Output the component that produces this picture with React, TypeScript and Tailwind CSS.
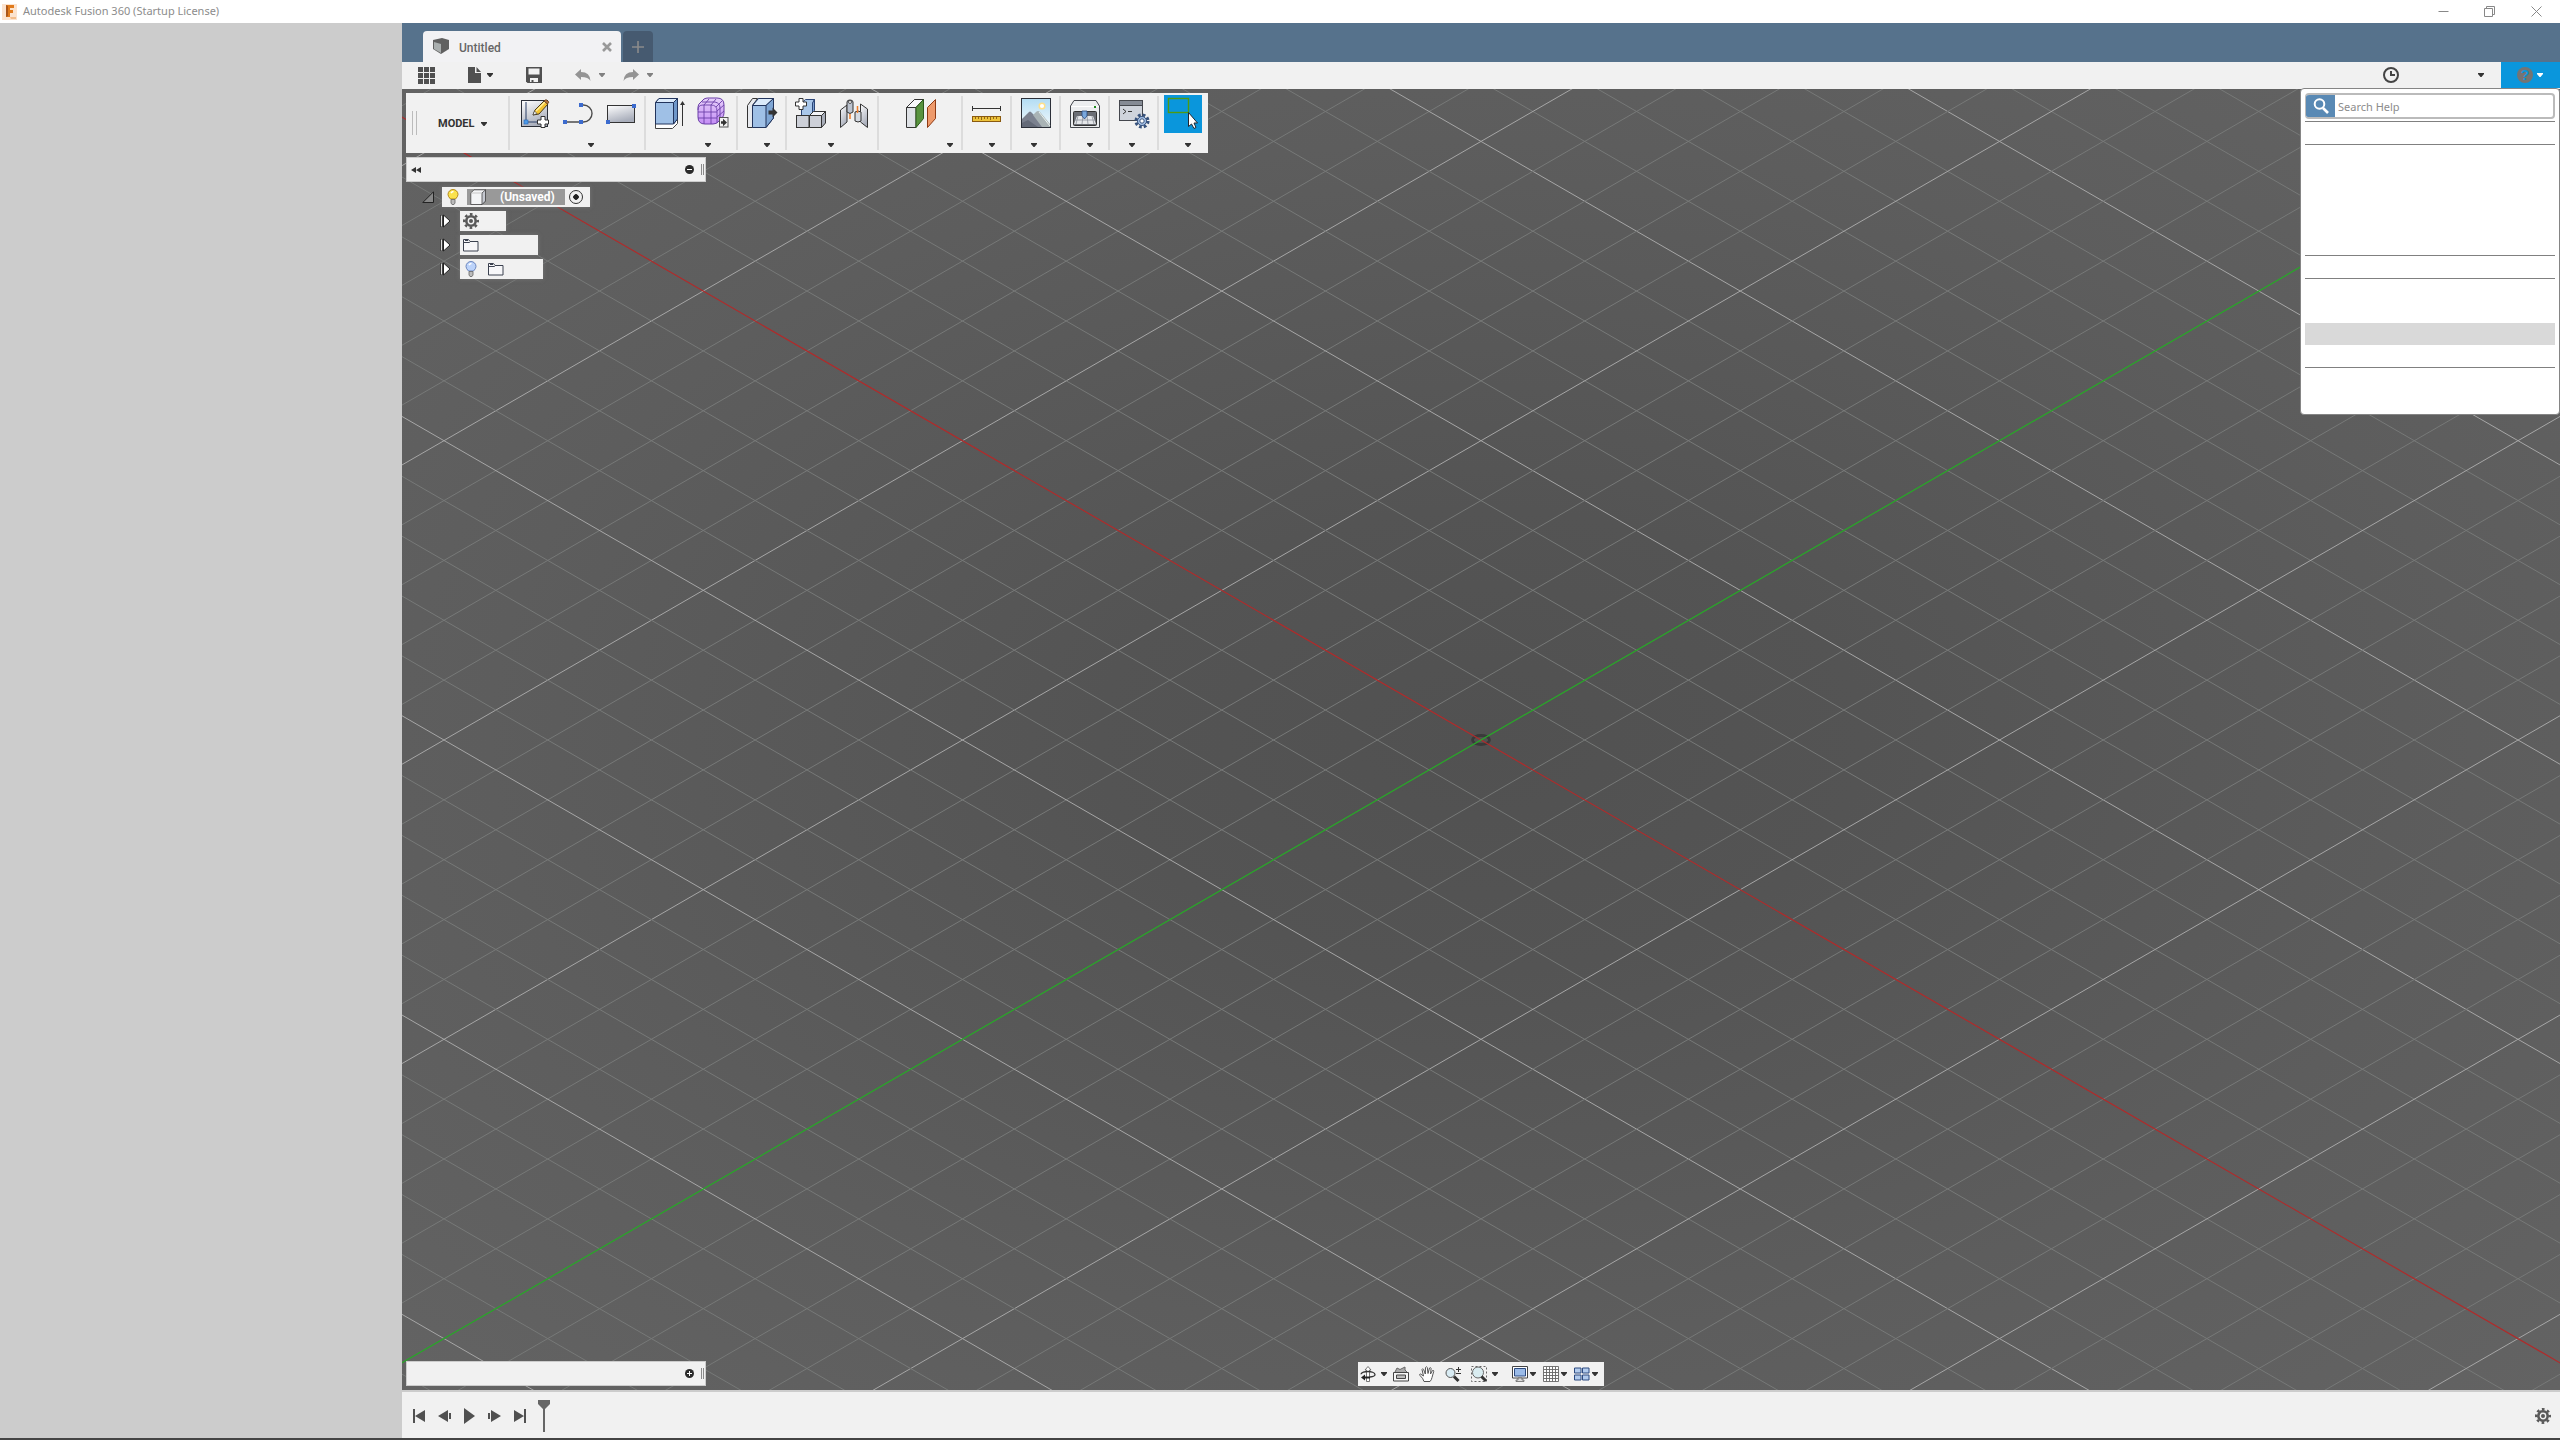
import type { ReactNode } from 'react'

const MINOR_X = 51.85
const MINOR_Y = 29.93
const EXTENT = 60

function Caret({ className = 'fill-[#333]' }: { className?: string }) {
    return (
        <svg viewBox="0 0 6 4" className={`h-1 w-1.5 shrink-0 ${className}`}>
            <path d="M0 0h6v1L3.5 4h-1L0 1z" />
        </svg>
    )
}

function Icon({ children, label }: { children: ReactNode; label: string }) {
    return (
        <button aria-label={label} className="h-8 w-8 shrink-0">
            <svg viewBox="0 0 32 32" className="h-8 w-8 overflow-visible" fill="none">
                {children}
            </svg>
        </button>
    )
}

function Small({ children, label }: { children: ReactNode; label: string }) {
    return (
        <button aria-label={label} className="h-4 w-4 shrink-0">
            <svg viewBox="0 0 16 16" className="h-4 w-4 overflow-visible" fill="none">
                {children}
            </svg>
        </button>
    )
}

function GearShape({ color = '#595959' }: { color?: string }) {
    return (
        <g stroke={color}>
            <circle cx="8" cy="8" r="6.8" strokeWidth="2.4" strokeDasharray="2.67 2.67" strokeDashoffset="1.33" />
            <circle cx="8" cy="8" r="4.7" strokeWidth="2.6" />
            <circle cx="8" cy="8" r="2" fill={color} stroke="none" />
        </g>
    )
}

function Plus({ x, y }: { x: number; y: number }) {
    return (
        <g transform={`translate(${x} ${y})`}>
            <path d="M-2 -5.5h4v3.5h3.5v4h-3.5v3.5h-4v-3.5h-3.5v-4h3.5z" fill="#fff" stroke="#333" />
        </g>
    )
}

function SketchIcon() {
    return (
        <Icon label="Create sketch">
            <rect x="3.5" y="2.5" width="26" height="26" fill="url(#steel)" stroke="#2b2f38" />
            <path d="M8 4v20h14" stroke="#2b3f66" />
            <rect x="6" y="22" width="4" height="4" fill="#4d9be8" stroke="#2466b8" strokeWidth=".6" />
            <path d="M15 17l2-5L26 3l4 3-9 10z" fill="#f5c431" stroke="#4a3a1a" />
            <path d="M18 13l9-9" stroke="#fff0a0" strokeWidth="1.4" />
            <path d="M26 3l2-1.5 3 2.5-1.5 2z" fill="#b5733c" stroke="#5d3a1c" strokeWidth=".7" />
            <path d="M15 17l1.5-4 2.5 2.5z" fill="#fff" stroke="#333" strokeWidth=".6" />
            <Plus x={25} y={24} />
        </Icon>
    )
}

function LineIcon() {
    return (
        <Icon label="Line">
            <path d="M4 24h18.5a8.5 8.5 0 0 0 0-17H20" stroke="#4c4c4c" strokeWidth="1.4" />
            <path d="M2 22h4v4H2zM18 22h4v4h-4zM18 5h4v4h-4z" fill="#3c6bce" />
        </Icon>
    )
}

function RectIcon() {
    return (
        <Icon label="Rectangle">
            <rect x="3.5" y="7.5" width="27" height="17" fill="url(#steel)" stroke="#333" />
            <path d="M2 22h4v4H2zM28 6h4v4h-4z" fill="#3c6bce" />
        </Icon>
    )
}

function ExtrudeIcon() {
    return (
        <Icon label="Extrude">
            <path d="M1.5 25v5.5h17l5-5V20" fill="#fff" stroke="#444" />
            <path d="M1.5 4.5L5 .5h18.5V21l-4 5h-18z" fill="#9fc0e6" stroke="#22345c" />
            <path d="M1.5 4.5L5 .5h18.5l-4 4z" fill="#dbeafa" stroke="#22345c" />
            <path d="M19.5 4.5l4-4V21l-4 5z" fill="#6f97c9" stroke="#22345c" />
            <path d="M28.5 6v22" stroke="#333" />
            <path d="M28.5 3l2.5 4h-5z" fill="#333" />
        </Icon>
    )
}

function FormIcon() {
    return (
        <Icon label="Create form">
            <path d="M1 9Q1 6 4 4l3-3q2-1 4-1h9q7 0 7 7v8q0 3-2 5l-3 3q-2 3-6 3H8q-7 0-7-7z" fill="url(#violet)" stroke="#6b3fa8" />
            <path d="M1 12q0-5 5-5h8q6 0 6 6v12M1 14h19M1 20h19M7 7v19M14 7v19M5 4h13q5 1 5 6v13M20 13l7-6M20 19l7-6M7 7l5-6M14 7l5-6M19 9l6-6" stroke="#6b3fa8" strokeWidth=".9" />
            <rect x="22.5" y="19.5" width="8.5" height="9.5" fill="#f1f1f1" stroke="#555" />
            <path d="M24 23.2h2v-2.5l4 3.7-4 3.8v-2.500h-2z" fill="#333" />
        </Icon>
    )
}

function PressPullIcon() {
    return (
        <Icon label="Press pull">
            <path d="M1.5 7.5l5-7h5l-5 7v22h-5z" fill="#e8eaee" stroke="#333" />
            <path d="M6.5 7.5l6-7H27.5V20l-7.5 9.5H6.5z" fill="#9fc0e6" stroke="#22345c" />
            <path d="M6.5 7.5H20l7.5-7H12.5z" fill="#dbeafa" stroke="#22345c" />
            <path d="M20 7.5l7.5-7V20L20 29.5z" fill="#7fa6d4" stroke="#22345c" />
            <path d="M22.5 12.500h4V9.500l5 5-5 5v-3h-4z" fill="#333" />
        </Icon>
    )
}

function ComponentIcon() {
    return (
        <Icon label="New component">
            <path d="M6.5 5l4-3.5h9L18 5v12.5H6.500z" fill="#a9c7ea" stroke="#2b4577" />
            <path d="M19.5 1.5v11l-2 5V5z" fill="#7a9fd0" stroke="#2b4577" />
            <rect x="1.5" y="17.5" width="12.5" height="12" fill="#cdd0d8" stroke="#333" />
            <path d="M14.5 17.5l4-4h12l-4 4z" fill="#f4f5f8" stroke="#333" />
            <path d="M14.5 17.5h12v12h-12z" fill="#cdd0d8" stroke="#333" />
            <path d="M26.5 17.5l4-4V25l-4 4.5z" fill="#a9aeba" stroke="#333" />
            <Plus x={6} y={6} />
        </Icon>
    )
}

function JointIcon() {
    return (
        <Icon label="Joint">
            <path d="M2.5 12l6.500-5v17l-6.500 5.500z" fill="url(#steel)" stroke="#333" />
            <path d="M9 4q0-2 3-2t3 2v10q-3 3-6 0z" fill="#bcc3cf" stroke="#333" />
            <circle cx="12" cy="4" r="1.5" fill="#fff" stroke="#333" strokeWidth=".8" />
            <path d="M22.500 6l7 5v18.500L22.500 24z" fill="url(#steel)" stroke="#333" />
            <path d="M17 14q3-2 6 0v9q-3 2-6 0z" fill="#d5dae2" stroke="#333" />
            <path d="M12 16v5M19.500 8v7" stroke="#ed7d2b" strokeWidth="1.5" />
        </Icon>
    )
}

function PlaneIcon() {
    return (
        <Icon label="Offset plane">
            <path d="M2.5 9.5l8-8h9l-7.5 8v20h-9.5z" fill="#dfe2e6" stroke="#333" />
            <path d="M2.5 9.5l8-8h9l-7.5 8z" fill="#f7f8fa" stroke="#333" />
            <path d="M12 9.5l7.5-8v19L12 29.5z" fill="#58933f" stroke="#2c5a1c" />
            <path d="M23.5 9.5l8-8v19l-8 9z" fill="#ee9a6b" stroke="#8f3b14" />
        </Icon>
    )
}

function MeasureIcon() {
    return (
        <Icon label="Measure">
            <path d="M1.5 8v5M29.5 8v5M1.5 10.5h28" stroke="#333" />
            <rect x="1.5" y="18.5" width="28" height="5" fill="#ecc23a" stroke="#8a5a10" />
            <path d="M4.500 19v2M7.500 19v2M10.500 19v3M13.500 19v2M16.500 19v2M19.500 19v3M22.500 19v2M25.500 19v2" stroke="#7a4d0c" strokeWidth=".8" />
        </Icon>
    )
}

function CanvasIcon() {
    return (
        <Icon label="Insert image">
            <rect x="1.5" y=".5" width="29" height="29" fill="url(#sky)" stroke="#2b2f38" />
            <circle cx="22" cy="8" r="2.8" fill="#fff" stroke="#ffe08a" strokeWidth="1.5" />
            <path d="M2 21l7-7q1-1 2 0l15 15H2z" fill="#7b818f" />
            <path d="M13 17l3-3q2-2 4 0l10 12v3H22z" fill="#a9b3b5" />
            <path d="M2 25l6-3 10 7H2z" fill="#646a78" />
            <path d="M19 14l11 14" stroke="#e9f2ee" />
        </Icon>
    )
}

function PrintIcon() {
    return (
        <Icon label="3D print">
            <path d="M1.5 8l3.500-5.500h22l3.500 5.500v21.500h-29z" fill="#eceef0" stroke="#44474d" />
            <path d="M2 8.5h28" stroke="#fff" />
            <rect x="25" y="8" width="2" height="2" fill="#1d8a1d" />
            <rect x="4.500" y="13.5" width="23" height="14" rx="1" fill="#6b6e75" stroke="#333" />
            <path d="M8 18h16l3 8H5z" fill="#e5e7ea" />
            <path d="M9 18l-2 8M14 18l-1 8M18 18l1 8M23 18l2 8M6 22h20" stroke="#8b9099" strokeWidth=".8" />
            <path d="M13 13h5v5l-2.500 3-2.500-3z" fill="#79a7dc" stroke="#26477c" strokeWidth=".8" />
        </Icon>
    )
}

function ScriptIcon() {
    return (
        <Icon label="Scripts and add-ins">
            <rect x="1.5" y="2.5" width="23" height="20" fill="#cfd4dc" stroke="#44474d" />
            <path d="M2 3h22v4H2z" fill="#858b95" />
            <path d="M2 7.5h22" stroke="#44474d" />
            <path d="M5 11l3 2.5L5 16M10 13.5h4" stroke="#333" />
            <g transform="translate(24 23)">
                <circle r="5.8" stroke="#38537d" strokeWidth="3.5" strokeDasharray="2.6 1.95" />
                <circle r="4.5" fill="#a7c3e8" stroke="#38537d" />
                <circle r="2.2" fill="#fff" stroke="#38537d" />
            </g>
        </Icon>
    )
}

function SelectIcon() {
    return (
        <button aria-label="Select" className="h-[38px] w-[38px] bg-[#0a96dc]">
            <svg viewBox="0 0 38 38" className="h-full w-full" fill="none">
                <rect x="4.5" y="3.5" width="20" height="14" stroke="#4f9a12" strokeWidth="1.4" />
                <path d="M24.5 17.5v14l3-2.5 2.5 4.5 2-1-2-4.5h3.5z" fill="#fff" stroke="#22262e" />
            </svg>
        </button>
    )
}

function Section({ width, arrow, center, children }: { width: string; arrow: string; center?: boolean; children: ReactNode }) {
    return (
        <div className={`flex flex-col ${width}`}>
            <div className={`flex h-[38px] items-center gap-[11px] ${center ? 'justify-center' : 'pl-2'}`}>{children}</div>
            <button aria-label="More" className={`flex flex-1 items-end pb-1 ${arrow}`}>
                <Caret />
            </button>
        </div>
    )
}

function Divider() {
    return <div className="my-px w-0.5 shrink-0 bg-[#dcdcdc]" />
}

function Ribbon() {
    return (
        <div className="flex h-[60px] w-max bg-[#f1f1f1] py-0.5 pr-px">
            <div className="flex w-[102px] items-center">
                <div className="ml-1.5 h-6 w-[5px] border-x border-[#bbb]" />
                <button className="ml-[21px] flex items-center gap-1.5 pt-0.5 font-[Roboto,sans-serif] text-[11px] font-bold text-[#333]">
                    MODEL
                    <Caret />
                </button>
            </div>
            <Divider />
            <Section width="w-[134px]" arrow="pl-[78px]">
                <SketchIcon />
                <LineIcon />
                <RectIcon />
            </Section>
            <Divider />
            <Section width="w-[90px]" arrow="pl-[59px]">
                <ExtrudeIcon />
                <FormIcon />
            </Section>
            <Divider />
            <Section width="w-[47px]" arrow="pl-[26px]">
                <PressPullIcon />
            </Section>
            <Divider />
            <Section width="w-[90px]" arrow="pl-[41px]">
                <ComponentIcon />
                <JointIcon />
            </Section>
            <Divider />
            <Section width="w-[82px]" arrow="pl-[68px]" center>
                <PlaneIcon />
            </Section>
            <Divider />
            <Section width="w-[47px]" arrow="pl-[26px]">
                <MeasureIcon />
            </Section>
            <Divider />
            <Section width="w-[47px]" arrow="pl-[19px]">
                <CanvasIcon />
            </Section>
            <Divider />
            <Section width="w-[47px]" arrow="pl-[26px]">
                <PrintIcon />
            </Section>
            <Divider />
            <Section width="w-[47px]" arrow="pl-[19px]">
                <ScriptIcon />
            </Section>
            <Divider />
            <Section width="w-[48px]" arrow="pl-[26px]" center>
                <SelectIcon />
            </Section>
        </div>
    )
}

function TitleBar() {
    return (
        <header className="flex h-[23px] items-center bg-white">
            <svg viewBox="0 0 16 16" className="ml-0.5 h-4 w-4" fill="none">
                <path d="M0 0h15v16H0z" fill="#fbe3cf" />
                <path d="M4 1h8v3H8v2h3v3H8v4H4z" fill="#e07a1c" />
                <path d="M4 1l2 1v10l-2 1z" fill="#a9561a" />
                <path d="M8 13h6v2H9z" fill="#f3bd8c" />
            </svg>
            <h1 className="ml-[5px] font-['Noto_Sans',sans-serif] text-[11px] text-[#8c8c8c]">Autodesk Fusion 360 (Startup License)</h1>
            <div className="ml-auto flex">
                <button aria-label="Minimize" className="flex w-[46px] justify-center">
                    <svg viewBox="0 0 11 11" className="h-[11px] w-[11px]" stroke="#888" fill="none"><path d="M.5 5.5h10" /></svg>
                </button>
                <button aria-label="Restore" className="flex w-[46px] justify-center">
                    <svg viewBox="0 0 11 11" className="h-[11px] w-[11px]" stroke="#888" fill="none"><path d="M.5 2.5h8v8h-8zM2.5 2.5v-2h8v8h-2" /></svg>
                </button>
                <button aria-label="Close" className="flex w-12 justify-center">
                    <svg viewBox="0 0 11 11" className="h-[11px] w-[11px]" stroke="#888" fill="none"><path d="M.5.5l10 10M10.5.5l-10 10" /></svg>
                </button>
            </div>
        </header>
    )
}

function TabStrip() {
    return (
        <div className="flex h-[39px] items-end gap-0.5 bg-[#56728c] pl-[21px]">
            <div className="flex h-[31px] w-[198px] items-center rounded-t bg-[#f2f2f4] px-[9px] pt-px">
                <svg viewBox="0 0 18 18" className="h-[18px] w-[18px]">
                    <path d="M1 2l9-2 7 2v9l-8 5-8-5z" fill="#606060" />
                    <path d="M2 4l7 2v9l-7-4z" fill="#a9aeae" />
                </svg>
                <span className="ml-[9px] pt-px font-[Roboto,sans-serif] text-[12px] font-medium text-[#666]">Untitled</span>
                <button aria-label="Close tab" className="ml-auto">
                    <svg viewBox="0 0 10 10" className="h-2.5 w-2.5" stroke="#999" strokeWidth="2.6"><path d="M1 1l8 8M9 1l-8 8" /></svg>
                </button>
            </div>
            <button aria-label="New tab" className="flex h-[31px] w-[30px] items-center justify-center rounded-t bg-[#465a70]">
                <svg viewBox="0 0 12 12" className="h-3 w-3" stroke="#8b8b8b" strokeWidth="1.6"><path d="M6 0v12M0 6h12" /></svg>
            </button>
        </div>
    )
}

function QuickBar() {
    return (
        <div className="flex h-[27px] items-center bg-[#f1f1f1] pb-px pl-4">
            <button aria-label="Data panel">
                <svg viewBox="0 0 17 17" className="h-[17px] w-[17px]" fill="#505050">
                    <path d="M0 0h5v5H0zM6 0h5v5H6zM12 0h5v5h-5zM0 6h5v5H0zM6 6h5v5H6zM12 6h5v5h-5zM0 12h5v5H0zM6 12h5v5H6zM12 12h5v5h-5z" />
                </svg>
            </button>
            <button aria-label="File" className="ml-[33px] flex items-center gap-1.5">
                <svg viewBox="0 0 13 16" className="h-4 w-[13px]" fill="#505050"><path d="M0 0h7v6h6v10H0zM8.5 0L13 5H8.5z" /></svg>
                <Caret />
            </button>
            <button aria-label="Save" className="ml-[33px]">
                <svg viewBox="0 0 16 16" className="h-4 w-4">
                    <path d="M0 0h16v16H1.500L0 14.500z" fill="#505050" />
                    <path d="M2.5 1.5h11v6h-11zM4 11h8v4H4z" fill="#f1f1f1" />
                    <path d="M5.5 13h2v2h-2z" fill="#505050" />
                </svg>
            </button>
            <button aria-label="Undo" className="ml-[33px] flex items-center gap-2">
                <svg viewBox="0 0 16 12" className="h-3 w-4" fill="#949494"><path d="M6 0v3q9 0 9.500 9-2-4-9.500-4v3L0 5.500z" /></svg>
                <Caret className="fill-[#808080]" />
            </button>
            <button aria-label="Redo" className="ml-[18px] flex items-center gap-2">
                <svg viewBox="0 0 16 12" className="h-3 w-4" fill="#949494"><path d="M10 0v3Q1 3 .5 12q2-4 9.500-4v3l6-5.500z" /></svg>
                <Caret className="fill-[#808080]" />
            </button>
            <div className="ml-auto flex h-full items-center">
                <button aria-label="Job status">
                    <svg viewBox="0 0 16 16" className="h-4 w-4" fill="none" stroke="#444" strokeWidth="2"><circle cx="8" cy="8" r="7" /><path d="M8 4v4h4" /></svg>
                </button>
                <button aria-label="Account" className="ml-[79px] flex items-center">
                    <Caret />
                </button>
                <button aria-label="Help" className="ml-[17px] flex h-full w-[59px] items-center gap-1 bg-[#0a96dc] pl-4">
                    <span className="flex h-4 w-4 items-center justify-center rounded-full bg-[#747474] font-['Liberation_Sans',sans-serif] text-[14px] leading-4 font-bold text-[#0a96dc]">?</span>
                    <Caret className="fill-white" />
                </button>
            </div>
        </div>
    )
}

function HelpMenu() {
    return (
        <div className="absolute top-[-1px] right-0 w-[260px] rounded-sm border border-[#858585] bg-white px-1 pt-1 pb-0.5">
            <div className="mb-0.5 flex h-[26px] items-stretch overflow-hidden rounded border-2 border-l border-[#bbb]">
                <button aria-label="Search" className="flex w-[29px] items-center justify-center bg-[#5989b4]">
                    <svg viewBox="0 0 16 16" className="h-4 w-4" fill="none" stroke="#fff" strokeWidth="2"><circle cx="6.5" cy="6" r="4.8" /><path d="M10 10l5 5" strokeWidth="2.6" /></svg>
                </button>
                <input
                    type="text"
                    aria-label="Search Help"
                    placeholder="Search Help"
                    className="min-w-0 flex-1 px-[3px] pt-0.5 font-['Noto_Sans',sans-serif] text-[11px] outline-none placeholder:text-[#8c8c8c]"
                />
            </div>
            <div className="h-[23px] border-t border-[#808080]" />
            <div className="h-[111px] border-t border-[#808080]" />
            <div className="h-[23px] border-t border-[#808080]" />
            <div className="h-[45px] border-t border-[#808080]" />
            <div className="h-[22px] bg-[#d9d9d9]" />
            <div className="h-[22px]" />
            <div className="h-[45px] border-t border-[#808080]" />
        </div>
    )
}

function Grid() {
    const indexes = Array.from({ length: EXTENT * 2 + 1 }, (_, i) => i - EXTENT).filter((i) => i !== 0)
    const half = EXTENT * MINOR_X
    const rise = EXTENT * MINOR_Y
    return (
        <svg viewBox="-1079 -651 2158 1301" preserveAspectRatio="xMidYMid slice" className="absolute inset-0 h-full w-full" fill="none">
            {indexes.map((i) => {
                const y = i * MINOR_Y * 2
                const color = i % 5 === 0 ? '#a6a6a6' : '#777978'
                return (
                    <g key={i} stroke={color}>
                        <path d={`M${-half} ${y - rise}L${half} ${y + rise}`} />
                        <path d={`M${-half} ${y + rise}L${half} ${y - rise}`} />
                    </g>
                )
            })}
            <ellipse rx="8.5" ry="4.5" stroke="#3a3a3a" strokeWidth="2.8" />
            <path d={`M${-half} ${-rise}L${half} ${rise}`} stroke="#b02b2b" strokeWidth="1.2" />
            <path d={`M${-half} ${rise}L${half} ${-rise}`} stroke="#2aa52a" strokeWidth="1.3" />
        </svg>
    )
}

function PanelEnd({ open }: { open: boolean }) {
    return (
        <div className="ml-auto flex items-center gap-[7px]">
            <button aria-label={open ? 'Collapse' : 'Expand'}>
                <svg viewBox="0 0 9 9" className="h-[9px] w-[9px]" stroke="#fff">
                    <circle cx="4.5" cy="4.5" r="4.5" fill="#2b2b2b" stroke="none" />
                    <path d={open ? 'M2 4.5h5' : 'M2 4.5h5M4.5 2v5'} />
                </svg>
            </button>
            <div className="h-[11px] w-[3px] border-x border-[#8a8a8a]" />
        </div>
    )
}

function Bulb({ glass, rim }: { glass: string; rim: string }) {
    return (
        <Small label="Toggle visibility">
            <path d="M5.5 10Q3 7.5 3 5.5a5 5 0 0 1 10 0q0 2-2.5 4.500z" fill={glass} stroke={rim} />
            <path d="M6 4q1-1.500 2.500-1.500" stroke="#fff" strokeWidth="1.5" />
            <path d="M6 10.5h4V14l-1 1.500H7L6 14z" fill="#bbb" stroke="#666" strokeWidth=".8" />
        </Small>
    )
}

function Folder() {
    return (
        <svg viewBox="0 0 16 16" className="h-4 w-4 shrink-0" fill="none" stroke="#3c4250">
            <path d="M.5 2.5h5l1.5 2h8v9.500H.5z" fill="#f7f7f9" />
            <path d="M.5 5.5h6l1-1M2 3.5h3" />
        </svg>
    )
}

function Branch({ width, children }: { width: string; children: ReactNode }) {
    return (
        <li className="flex items-center gap-[9px]">
            <button aria-label="Expand">
                <svg viewBox="0 0 11 14" className="h-3.5 w-[11px]"><path d="M3.5 1l6.500 6-6.500 6z" fill="#fff" stroke="#222" /><path d="M1.5 1v12" stroke="#222" strokeWidth="2" /><path d="M1.5 1.5v11" stroke="#ddd" /></svg>
            </button>
            <div className={`flex h-5 items-center gap-[9px] bg-[#f1f1f1] px-[3px] shadow-[0_0_4px_#777] ${width}`}>{children}</div>
        </li>
    )
}

function Browser() {
    return (
        <div>
            <div className="flex h-[25px] w-[300px] items-center border border-[#ccc] bg-[#f1f1f1] pr-px pl-1">
                <button aria-label="Hide browser">
                    <svg viewBox="0 0 10 6" className="h-1.5 w-2.5" fill="#333"><path d="M5 0v6L0 3zM10 0v6L5 3z" /></svg>
                </button>
                <PanelEnd open />
            </div>
            <div className="mt-[5px] flex items-center gap-2 pl-4">
                <button aria-label="Collapse">
                    <svg viewBox="0 0 12 12" className="h-3 w-3"><path d="M.8 11.5L11.5.8v10.700z" fill="#888" stroke="#222" /></svg>
                </button>
                <div className="flex h-5 w-[148px] items-center bg-[#f1f1f1] pl-[3px] shadow-[0_0_4px_#777]">
                    <Bulb glass="#fbe24c" rim="#b58a1a" />
                    <div className="ml-[6px] flex h-4 w-[98px] items-center gap-[14px] bg-[#999] pl-[3px]">
                        <svg viewBox="0 0 16 16" className="h-4 w-4" stroke="#444" strokeWidth=".8">
                            <path d="M.8 4L4 .8h11.500V12L12 15.500H.8z" fill="#f3f4f6" />
                            <path d="M12 4L15.500.8V12L12 15.500z" fill="#c5c8d0" />
                            <path d="M.8 4H12" stroke="#bbb" />
                        </svg>
                        <span className="font-[Roboto,sans-serif] text-[12px] leading-4 font-bold text-white">(Unsaved)</span>
                    </div>
                    <label className="ml-1 flex h-3.5 w-3.5">
                        <input type="radio" aria-label="Activate component" defaultChecked className="h-3.5 w-3.5 appearance-none rounded-full border border-[#333] bg-[radial-gradient(circle,#222_2.5px,#f1f1f1_3px)]" />
                    </label>
                </div>
            </div>
            <ul className="mt-1 flex flex-col gap-1 pl-[34px]">
                <Branch width="w-[46px]">
                    <Small label="Document settings"><GearShape /></Small>
                </Branch>
                <Branch width="w-[78px]">
                    <Folder />
                </Branch>
                <Branch width="w-[83px]">
                    <Bulb glass="#bcd3fa" rim="#6c86bd" />
                    <Folder />
                </Branch>
            </ul>
        </div>
    )
}

function NavBar() {
    return (
        <div className="flex h-6 w-max items-center bg-[#f1f1f1] px-0.5">
            <div className="flex w-[33px] items-center gap-[5px]">
                <Small label="Orbit">
                    <path d="M6.5 15.5V4H5L8 .5 11 4H9.500v11.500z" fill="#fff" stroke="#555" strokeWidth=".8" />
                    <path d="M10 11q5-.5 5-2.500c0-2-4-3-7-3s-7 1-7 2.700" stroke="#333" strokeWidth="1.3" />
                    <path d="M1 11.5l4-3v2h5v2H5v2z" fill="#222" />
                </Small>
                <Caret />
            </div>
            <div className="flex w-[26px]">
                <Small label="Look at">
                    <path d="M.5 6.5h15v8.500H.5z" fill="#f6f6f6" stroke="#444" />
                    <path d="M3.5 9h9v3.500h-9z" fill="#bbb" stroke="#444" />
                    <path d="M2 6l2-4 3 1.500L12 1v3l2 2" fill="#aaa" stroke="#666" />
                </Small>
            </div>
            <div className="flex w-[26px]">
                <Small label="Pan">
                    <path d="M5 15.5Q4 12 1 9.500q-1-1.500.5-1.500L4.500 10 3 3.500q.5-1.500 1.600 0L6.300 8 6.500 1.500q1-1.500 1.800 0L9 7.500l1.500-5.500q1.300-1 1.600.5L11.500 8l2-3.500q1.500-.5 1.200 1L13 11.500q-.5 2.500-2 4z" fill="#fff" stroke="#555" />
                </Small>
            </div>
            <div className="flex w-[26px]">
                <Small label="Zoom">
                    <circle cx="5.5" cy="7" r="4.5" fill="#d9ecf4" stroke="#555" />
                    <path d="M9 10.5l4.500 4.500" stroke="#333" strokeWidth="3" />
                    <path d="M11 3.5h5M13.5 1v5M11 7.5h5" stroke="#333" />
                </Small>
            </div>
            <div className="flex w-[41px] items-center gap-[5px]">
                <Small label="Fit">
                    <path d="M.5.5h15v15H.5z" stroke="#666" strokeDasharray="2 2" />
                    <circle cx="7" cy="6.5" r="5.5" fill="#d9ecf0" stroke="#666" />
                    <path d="M10.5 10.5l4.500 4.500" stroke="#333" strokeWidth="3" />
                </Small>
                <Caret />
            </div>
            <div className="flex w-[31px] items-center gap-0.5">
                <Small label="Display settings">
                    <path d="M.5.5h15v11.500H.5z" fill="#fff" stroke="#444" />
                    <path d="M2.5 2.5h11v7.500h-11z" fill="#9bbbe8" stroke="#2c4a80" />
                    <path d="M6 12h4v2h2v1.500H4V14h2z" fill="#ddd" stroke="#555" strokeWidth=".7" />
                </Small>
                <Caret />
            </div>
            <div className="flex w-[31px] items-center gap-0.5">
                <Small label="Grid and snaps">
                    <path d="M.5.5h15v15H.5zM3.5.5v15M6.5.5v15M9.500.5v15M12.500.5v15M.5 3.5h15M.5 6.5h15M.5 9.5h15M.5 12.5h15" fill="#fff" stroke="#666" strokeWidth=".9" />
                </Small>
                <Caret />
            </div>
            <div className="flex w-7 items-center gap-0.5">
                <Small label="Viewports">
                    <path d="M.5 2h6.500v5H.5zM8.5 2H15v5H8.500zM.5 9h6.500v5H.5zM8.5 9H15v5H8.500z" fill="#b2cbed" stroke="#2c4a80" />
                </Small>
                <Caret />
            </div>
        </div>
    )
}

function Timeline() {
    return (
        <footer className="flex h-12 items-center border-t-2 border-[#ccc] bg-[#f1f1f1] pt-0.5 pr-[9px] pl-[11px]">
            <div className="flex gap-3 text-[#505050]">
                <button aria-label="Go to start"><svg viewBox="0 0 13 16" className="h-4 w-[13px]" fill="currentColor"><path d="M0 1h2v14H0zM12 2v12L2 8z" /></svg></button>
                <button aria-label="Step back"><svg viewBox="0 0 13 16" className="h-4 w-[13px]" fill="currentColor"><path d="M10 2v12L0 8zM11 5h2v6h-2z" /></svg></button>
                <button aria-label="Play"><svg viewBox="0 0 13 16" className="h-4 w-[13px]" fill="currentColor"><path d="M1 0l11 8-11 8z" /></svg></button>
                <button aria-label="Step forward"><svg viewBox="0 0 13 16" className="h-4 w-[13px]" fill="currentColor"><path d="M3 2l10 6-10 6zM0 5h2v6H0z" /></svg></button>
                <button aria-label="Go to end"><svg viewBox="0 0 13 16" className="h-4 w-[13px]" fill="currentColor"><path d="M11 1h2v14h-2zM1 2l10 6-10 6z" /></svg></button>
                <svg viewBox="0 0 12 32" className="-my-2 h-8 w-3" fill="#666"><path d="M0 0h12v4L7 9v23H5V9L0 4z" /></svg>
            </div>
            <div className="ml-auto flex">
                <Small label="Timeline settings"><GearShape /></Small>
            </div>
        </footer>
    )
}

export default function App() {
    return (
        <div className="flex h-screen flex-col overflow-hidden border-b-2 border-[#444] bg-[#ccc]">
            <svg className="absolute h-0 w-0">
                <defs>
                    <linearGradient id="steel" x1="0" y1="0" x2=".4" y2="1"><stop offset="0" stopColor="#fff" /><stop offset="1" stopColor="#a9aebb" /></linearGradient>
                    <linearGradient id="violet" x1="0" y1="0" x2="0" y2="1"><stop offset="0" stopColor="#e6d0fa" /><stop offset="1" stopColor="#c48df5" /></linearGradient>
                    <linearGradient id="sky" x1="0" y1="0" x2="0" y2="1"><stop offset="0" stopColor="#b2dcf3" /><stop offset="1" stopColor="#f4fafc" /></linearGradient>
                </defs>
            </svg>
            <TitleBar />
            <div className="flex min-h-0 flex-1">
                <aside className="w-[402px] shrink-0" />
                <main className="flex min-w-0 flex-1 flex-col">
                    <TabStrip />
                    <QuickBar />
                    <div className="relative min-h-0 flex-1 bg-[radial-gradient(ellipse_at_center,#515151_0%,#545454_25%,#5d5d5d_65%,#636363_100%)]">
                        <Grid />
                        <div className="relative flex h-full flex-col justify-between p-1">
                            <div className="flex flex-col gap-1">
                                <Ribbon />
                                <Browser />
                            </div>
                            <div className="grid grid-cols-[1fr_auto_1fr] items-end">
                                <div className="flex h-[25px] w-[300px] items-center border border-[#ccc] bg-[#f1f1f1] pr-px">
                                    <PanelEnd open={false} />
                                </div>
                                <NavBar />
                            </div>
                        </div>
                        <HelpMenu />
                    </div>
                    <Timeline />
                </main>
            </div>
        </div>
    )
}
